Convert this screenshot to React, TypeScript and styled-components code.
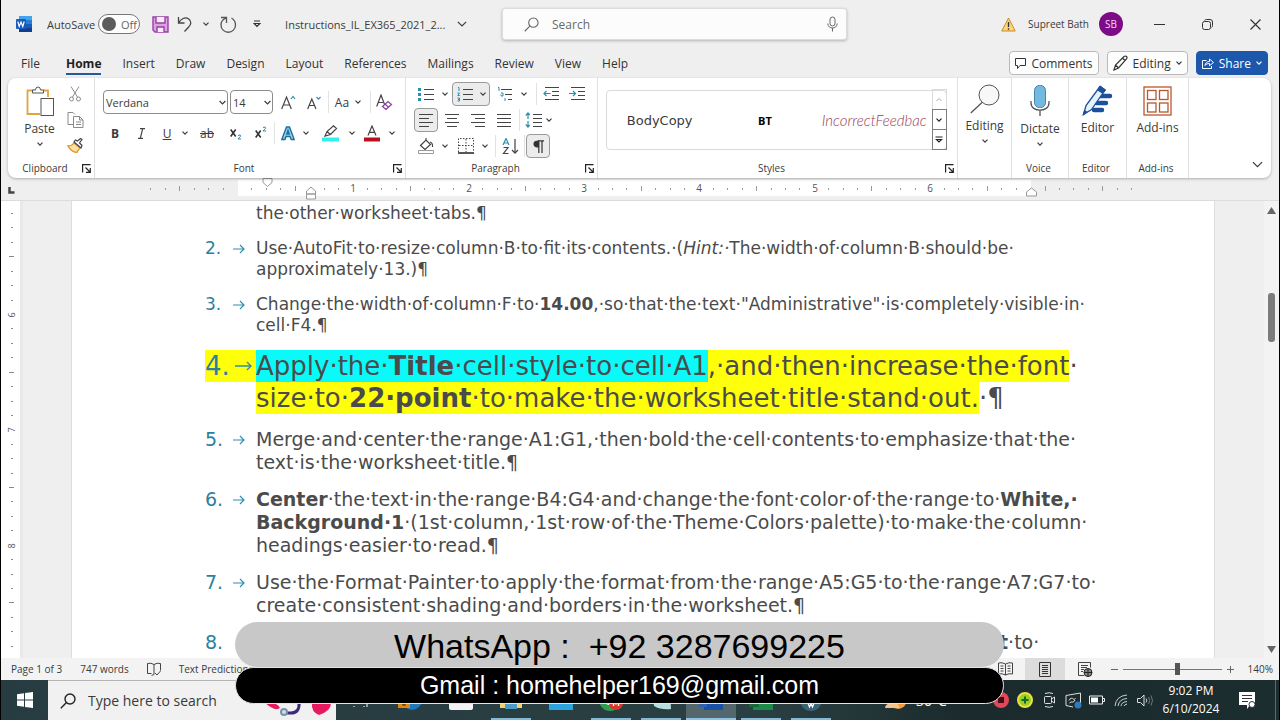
import React from 'react';
import styled, { createGlobalStyle, css } from 'styled-components';

const Global = createGlobalStyle`
  *, *::before, *::after { box-sizing: border-box; }
  body { margin: 0; background: #000; font-family: "Open Sans", "Noto Sans", sans-serif; color: #3b3b3b; }
  button, input, select { font: inherit; color: inherit; }
  button { background: none; border: 0; padding: 0; cursor: pointer; }
  svg { display: block; flex: none; }
`;

/* ---------- shell ---------- */
const Shell = styled.div`
  position: relative;
  height: 100vh;
  min-height: 480px;
  display: flex;
  flex-direction: column;
  overflow: hidden;
  background: #efefef;
  border-left: 1px solid #000;
  border-right: 1px solid #000;
`;

/* ---------- title bar ---------- */
const TitleBar = styled.header`
  display: flex;
  align-items: center;
  height: 48px;
  flex: none;
  padding: 0 12px 0 15px;
  font-size: 11px;
`;
const TitleLeft = styled.div`
  display: flex;
  align-items: center;
  width: 486px;
  flex: none;
`;
const AutoSave = styled.label`
  display: flex;
  align-items: center;
  gap: 3px;
  margin: 0 12px 0 15px;
`;
const Toggle = styled.span`
  display: flex;
  align-items: center;
  gap: 5px;
  width: 42px;
  height: 20px;
  padding-left: 3px;
  border: 1px solid #777;
  border-radius: 10px;
  background: #fdfdfd;
  color: #666;
`;
const ToggleBox = styled.input`
  appearance: none;
  margin: 0;
  width: 14px;
  height: 14px;
  border-radius: 50%;
  background: #5c5c5c;
`;
const QuickButton = styled.button<{ $w: number }>`
  width: ${(p) => p.$w}px;
  height: 24px;
  display: flex;
  align-items: center;
  justify-content: center;
`;
const FileName = styled.button`
  display: flex;
  align-items: center;
  gap: 12px;
  margin-left: 16px;
  white-space: nowrap;
`;
const SearchBox = styled.label`
  display: flex;
  align-items: center;
  gap: 13px;
  flex: 0 1 345px;
  height: 32px;
  padding: 0 8px 0 21px;
  background: #fcfcfc;
  border: 1px solid #dcdcdc;
  border-radius: 3px;
  box-shadow: 0 1px 3px rgba(0, 0, 0, 0.25);
  font-size: 12px;
`;
const SearchInput = styled.input`
  flex: 1;
  min-width: 0;
  border: 0;
  outline: 0;
  padding: 0;
  background: none;
  &::placeholder { color: #6a6a6a; opacity: 1; }
`;
const TitleRight = styled.div`
  display: flex;
  align-items: center;
  margin-left: auto;
`;
const UserName = styled.span`
  margin-left: 12px;
  font-size: 10px;
  white-space: nowrap;
`;
const Avatar = styled.span`
  display: flex;
  align-items: center;
  justify-content: center;
  width: 24px;
  height: 24px;
  margin: 0 12px 0 10px;
  border-radius: 50%;
  background: #7d0a86;
  color: #f3d9f5;
  font-size: 10px;
`;
const WindowButton = styled.button`
  width: 48px;
  height: 32px;
  display: flex;
  align-items: center;
  justify-content: center;
  &:last-child { width: 24px; margin-left: 12px; }
`;

/* ---------- tabs ---------- */
const TabBar = styled.nav`
  display: flex;
  align-items: center;
  height: 30px;
  flex: none;
  padding: 0 11px 0 20px;
  font-size: 12px;
`;
const Tab = styled.a<{ $active?: boolean }>`
  margin-right: 21px;
  padding-top: 4px;
  line-height: 18px;
  color: #333;
  text-decoration: none;
  border-bottom: 2px solid transparent;
  &:first-child { margin-right: 26px; }
  ${(p) => p.$active && css`
    font-weight: 700;
    color: #1f1f1f;
    border-color: #2b579a;
  `}
`;
const TabActions = styled.div`
  display: flex;
  gap: 8px;
  margin-left: auto;
`;
const ActionButton = styled.button<{ $primary?: boolean }>`
  display: flex;
  align-items: center;
  gap: 5px;
  height: 24px;
  padding: 0 5px;
  border: 1px solid ${(p) => (p.$primary ? '#1c57ab' : '#b9b9b9')};
  border-radius: 4px;
  background: ${(p) => (p.$primary ? '#1c57ab' : '#fdfdfd')};
  color: ${(p) => (p.$primary ? '#fff' : '#333')};
  font-size: 12px;
`;

/* ---------- ribbon ---------- */
const Ribbon = styled.section`
  display: flex;
  height: 100px;
  flex: none;
  margin: 0 8px 0 7px;
  background: #fff;
  border-radius: 8px;
  box-shadow: 0 1px 3px rgba(0, 0, 0, 0.28);
  position: relative;
`;
const Group = styled.div<{ $w: number }>`
  display: flex;
  flex-direction: column;
  flex: 0 0 ${(p) => p.$w}px;
  padding: 4px 0 2px;
  border-right: 1px solid #e0e0e0;
  background-clip: padding-box;
`;
const GroupBody = styled.div`
  flex: 1;
  display: flex;
  min-height: 0;
`;
const GroupLabel = styled.div`
  display: flex;
  align-items: center;
  height: 16px;
  padding-right: 3px;
  font-size: 10px;
`;
const GroupName = styled.span`
  flex: 1;
  text-align: center;
  white-space: nowrap;
`;
const BigButton = styled.button<{ $gap: number; $top: number; $left?: number }>`
  flex: 1;
  display: flex;
  flex-direction: column;
  align-items: center;
  gap: ${(p) => p.$gap}px;
  padding-top: ${(p) => p.$top}px;
  padding-left: ${(p) => p.$left ?? 0}px;
  font-size: 12px;
  line-height: 16px;
`;
const SmallStack = styled.div`
  display: flex;
  flex-direction: column;
  align-items: center;
  gap: 10px;
  width: 38px;
  padding: 4px 0 0;
`;
const PlainButton = styled.button`
  display: block;
`;
const Rows = styled.div<{ $top: number; $gap: number }>`
  flex: 1;
  display: flex;
  flex-direction: column;
  gap: ${(p) => p.$gap}px;
  padding: ${(p) => p.$top}px 0 0 8px;
`;
const Row = styled.div`
  display: flex;
  align-items: center;
  height: 24px;
`;
const SelectWrap = styled.label<{ $w: number }>`
  display: flex;
  align-items: center;
  width: ${(p) => p.$w}px;
  height: 24px;
  margin-right: 2px;
  padding-right: 1px;
  border: 1px solid #8c8c8c;
  border-radius: 4px;
`;
const Select = styled.select`
  flex: 1;
  min-width: 0;
  appearance: none;
  border: 0;
  background: none;
  outline: 0;
  padding: 0 0 0 2px;
  font-size: 11px;
`;
const Tool = styled.button<{ $w: number; $on?: boolean }>`
  display: flex;
  align-items: center;
  justify-content: center;
  gap: 7px;
  flex: none;
  width: ${(p) => p.$w}px;
  height: 24px;
  font-size: 12px;
  border-radius: 4px;
  ${(p) => p.$on && css`
    background: #ececec;
    border: 1px solid #9a9a9a;
  `}
`;
const Divider = styled.span<{ $before?: number }>`
  width: 1px;
  height: 22px;
  background: #e2e2e2;
  margin: 0 1px 0 ${(p) => p.$before ?? 1}px;
`;
const Gallery = styled.div`
  display: flex;
  flex: 1;
  height: 60px;
  margin: 8px 10px 0 8px;
  border: 1px solid #dadada;
  border-radius: 4px;
`;
const StyleCard = styled.button`
  flex: 1;
  min-width: 0;
  overflow: hidden;
  white-space: nowrap;
`;
const BodyStyle = styled(StyleCard)`
  font-family: "DejaVu Sans", sans-serif;
  font-size: 13px;
`;
const BoldStyle = styled(StyleCard)`
  color: #000;
  font-weight: 700;
  font-size: 11px;
`;
const FeedbackStyle = styled(StyleCard)`
  margin: 0 6px 0 4px;
  font-family: Lato, sans-serif;
  font-style: italic;
  font-weight: 300;
  color: #9c3c56;
  font-size: 15px;
  text-align: left;
`;
const Steps = styled.div`
  display: flex;
  flex-direction: column;
  width: 15px;
  margin: -1px;
`;
const Step = styled.button<{ $dim?: boolean }>`
  flex: 1;
  display: flex;
  align-items: center;
  justify-content: center;
  border: 1px solid ${(p) => (p.$dim ? '#dadada' : '#7e7e7e')};
  margin-top: -1px;
  color: ${(p) => (p.$dim ? '#aaa' : '#222')};
`;
const Collapse = styled.button`
  margin: auto 8px 8px auto;
`;

/* ---------- ruler + document ---------- */
const RulerBar = styled.div`
  height: 23px;
  flex: none;
  border-bottom: 1px solid #dcdcdc;
  overflow: hidden;
`;
const Workspace = styled.main`
  flex: 1;
  min-height: 0;
  display: flex;
  overflow: hidden;
`;
const SideRuler = styled.div`
  width: 22px;
  flex: none;
  background: #fff;
  border-right: 3px solid #e9e9e9;
  overflow: hidden;
`;
const Page = styled.article`
  flex: 1;
  min-width: 0;
  margin: 0 49px 0 48px;
  padding: 2px 0 0 133px;
  background: #fff;
  border: solid #dedede;
  border-width: 0 1px;
  overflow: hidden;
  color: #4b4b4b;
  font-family: "DejaVu Sans", Verdana, sans-serif;
`;
const Steplist = styled.ol`
  list-style: none;
  margin: 0;
  padding: 0;
  display: flex;
  flex-direction: column;
  gap: 14px;
`;
const sizes = {
  s: css`font-size: 17px; line-height: 21px;`,
  m: css`font-size: 19px; line-height: 23px;`,
  l: css`font-size: 26px; line-height: 32px;`,
};
const StepItem = styled.li<{ $size: keyof typeof sizes }>`
  display: grid;
  grid-template-columns: 51px 1fr;
  white-space: nowrap;
  ${(p) => sizes[p.$size]}
`;
const Num = styled.span<{ $mark?: boolean }>`
  display: flex;
  align-items: center;
  justify-content: space-between;
  align-self: start;
  padding-right: ${(p) => (p.$mark ? 4 : 11)}px;
  background: ${(p) => (p.$mark ? '#ffff0a' : 'none')};
  color: #2d7f9d;
`;
const Mark = styled.mark<{ $c: string }>`
  background: ${(p) => p.$c};
  color: inherit;
  padding: 1px 0;
`;
const Trailing = styled.span`
  padding-left: 743px;
`;
const Scroll = styled.div`
  width: 15px;
  flex: none;
  display: flex;
  flex-direction: column;
  align-items: center;
  padding: 6px 0 5px;
  background: #f3f3f3;
`;
const Thumb = styled.div`
  width: 7px;
  height: 49px;
  margin: 79px 0 auto;
  border-radius: 3px;
  background: #7c7c7c;
`;

/* ---------- status bar ---------- */
const StatusBar = styled.footer`
  display: flex;
  align-items: center;
  height: 22px;
  flex: none;
  padding: 0 6px 0 10px;
  background: #f3f3f3;
  font-size: 10px;
`;
const StatusItem = styled.span`
  margin-right: 18px;
  white-space: nowrap;
`;
const ViewButton = styled.button<{ $on?: boolean }>`
  display: flex;
  align-items: center;
  justify-content: center;
  width: 40px;
  height: 22px;
  background: ${(p) => (p.$on ? '#dcdcdc' : 'none')};
`;
const ZoomGroup = styled.div`
  display: flex;
  align-items: center;
  margin-left: 5px;
`;
const ZoomRange = styled.input`
  appearance: none;
  width: 99px;
  height: 12px;
  margin: 0 4px;
  background: linear-gradient(#777, #777) center / 100% 1px no-repeat;
  &::-webkit-slider-thumb {
    appearance: none;
    width: 5px;
    height: 12px;
    background: #555;
  }
`;
const ZoomValue = styled.output`
  width: 38px;
  text-align: right;
`;

/* ---------- taskbar ---------- */
const Taskbar = styled.div`
  display: flex;
  height: 40px;
  flex: none;
  background: linear-gradient(90deg, #263c40, #2a3f42 60%, #1b2b2d 75%, #1b2d2f);
  color: #fff;
`;
const StartButton = styled.button`
  width: 47px;
  display: flex;
  align-items: center;
  justify-content: center;
`;
const TaskSearch = styled.label`
  display: flex;
  align-items: center;
  gap: 12px;
  width: 288px;
  padding-left: 12px;
  background: #f1f1f1;
  color: #333;
  border-top: 1px solid #b5b5b5;
  font-size: 14px;
  overflow: hidden;
  & input { flex: 0 0 164px; }
  & input::placeholder { color: #3a3a3a; }
`;
const AppButton = styled.button<{ $open?: boolean; $active?: boolean }>`
  width: 50px;
  display: flex;
  justify-content: center;
  align-items: center;
  background: ${(p) => (p.$active ? '#53676d' : 'none')};
  box-shadow: ${(p) => (p.$active ? 'inset 0 -2px #8fc4e6' : 'none')};
  ${(p) => p.$open && css`
    background: linear-gradient(#86b9d6, #86b9d6) bottom / 40px 2px no-repeat;
  `}
`;
const Weather = styled.div`
  display: flex;
  align-items: center;
  gap: 8px;
  margin-left: 48px;
  font-size: 14px;
`;
const Tray = styled.div`
  display: flex;
  align-items: center;
  margin-left: auto;
`;
const TrayButton = styled.button`
  width: 24px;
  display: flex;
  justify-content: center;
`;
const Clock = styled.time`
  width: 68px;
  text-align: center;
  font-size: 12px;
  line-height: 18px;
  white-space: nowrap;
`;
const NoticeButton = styled.button`
  width: 44px;
  display: flex;
  justify-content: center;
`;
const DesktopEdge = styled.span`
  align-self: stretch;
  width: 1px;
  margin: 0 3px 0 6px;
  background: #5c6c6e;
`;

/* ---------- contact banner, floats over the window ---------- */
const Banner = styled.aside`
  position: absolute;
  left: 234px;
  right: 275px;
  bottom: 16px;
  font-family: "Liberation Sans", Arial, sans-serif;
  text-align: center;
`;
const Phone = styled.div`
  height: 45px;
  border-radius: 23px;
  background: #c8c8c8;
  color: #000;
  font-size: 34px;
  line-height: 48px;
  white-space: pre;
`;
const Mail = styled.div`
  height: 37px;
  border: 1px solid #e4e4e4;
  border-radius: 19px;
  background: #000;
  color: #fff;
  font-size: 25px;
  line-height: 34px;
`;

/* ---------- icons ---------- */
type IconProps = { w: number; h: number; children: React.ReactNode; sw?: number; c?: string; vb?: string };
const Icon = ({ w, h, children, sw = 1, c = 'currentColor', vb }: IconProps) => (
  <svg width={w} height={h} viewBox={vb ?? `0 0 ${w} ${h}`} fill="none" stroke={c} strokeWidth={sw} aria-hidden="true">{children}</svg>
);
const Chevron = ({ w = 6, sw = 1.2 }: { w?: number; sw?: number }) => (
  <Icon w={w} h={w} vb="0 0 6 6" sw={sw * 6 / w}><path d="M.5 1.7 3 4.2 5.5 1.7" /></Icon>
);
const Drop = ({ w = 12, label }: { w?: number; label: string }) => (
  <Tool $w={w} aria-label={label}><Chevron /></Tool>
);
const Launcher = () => (
  <PlainButton aria-label="More options">
    <Icon w={9} h={9} c="#222" sw={1.2}><path d="M.6 8.500V.6H8.500M3.500 3.500l4.500 4.500M8.300 4v4.300H4" /></Icon>
  </PlainButton>
);
const Lens = ({ s, c, sw = 1.2 }: { s: number; c: string; sw?: number }) => (
  <Icon w={s} h={s} vb="0 0 16 16" c={c} sw={sw * 16 / s}><circle cx="10" cy="6" r="5" /><path d="M6.500 9.500 .8 15.200" /></Icon>
);
const Lines = ({ rows, children }: { rows: [number, number][]; children?: React.ReactNode }) => (
  <Icon w={16} h={16} c="#444">
    {rows.map(([a, b], i) => <path key={i} d={`M${a} ${(rows.length === 3 ? 3 : 2) + i * (rows.length === 3 ? 5 : 4)}.5H${b}`} />)}
    {children}
  </Icon>
);
const Arrow = ({ w }: { w: number }) => (
  <Icon w={w} h={12} vb={`0 0 ${w} 12`} c="#2d8fb0" sw={w > 13 ? 1.4 : 1.1}>
    <path d={`M0 6H${w - 1}M${w - 5} 2l4 4-4 4`} />
  </Icon>
);

const HorizontalRuler = () => {
  const ticks = [];
  for (let i = -6; i <= 62; i++) {
    const x = Math.round(237 + i * 14.42);
    if (i === 0) continue;
    if (i % 8 === 0 && i > 0 && i < 56) ticks.push(<text key={i} x={x} y="14" textAnchor="middle" fontSize="10" fill="#555" stroke="none">{i / 8}</text>);
    else if (i % 4 === 0) ticks.push(<path key={i} d={`M${x - 1}.5 8v5`} />);
    else ticks.push(<path key={i} d={`M${x - 1}.5 10v2`} />);
  }
  return (
    <Icon w={1278} h={23} c="#999">
      <rect x="237" y="2" width="793" height="16" fill="#fff" stroke="none" />
      <path d="M8.500 9v5.500h5" stroke="#444" strokeWidth="2.500" />
      {ticks}
      <path d="M262 .5h9v4l-4.500 4-4.500-4z" fill="#fff" />
      <path d="M305.500 16v-3l4.500-4 4.500 4v3zM305.500 16h9v5h-9z" fill="#fff" />
      <path d="M1025.500 18v-4l5-4 5 4v4z" fill="#fff" />
    </Icon>
  );
};

const VerticalRuler = () => {
  const ticks = [];
  for (let i = -7; i <= 23; i++) {
    const y = Math.round(114 + i * 14.42);
    if (i % 8 === 0) ticks.push(<text key={i} x="0" y="0" transform={`translate(14 ${y}) rotate(-90)`} textAnchor="middle" fontSize="9" fill="#555" stroke="none">{6 + i / 8}</text>);
    else if (i % 4 === 0) ticks.push(<path key={i} d={`M8 ${y - 1}.5h5`} />);
    else ticks.push(<path key={i} d={`M10 ${y - 1}.5h2`} />);
  }
  return <Icon w={19} h={460} c="#888">{ticks}</Icon>;
};

export default function App() {
  return (
    <>
      <Global />
      <Shell>
        <TitleBar>
          <TitleLeft>
            <Icon w={16} h={16}>
              <rect x="3" width="13" height="16" rx="1" fill="#2b7cd3" stroke="none" />
              <path d="M3 0h13v4H3z" fill="#41a5ee" stroke="none" /><path d="M3 8h13v4H3z" fill="#185abd" stroke="none" /><path d="M3 12h13v4H3z" fill="#103f91" stroke="none" />
              <rect y="3" width="10" height="10" rx="1" fill="#185abd" stroke="none" />
              <path d="m1.800 5.500 1.400 5L5 6l1.800 4.500 1.400-5" stroke="#fff" strokeWidth="1.200" />
            </Icon>
            <AutoSave>AutoSave<Toggle><ToggleBox type="checkbox" />Off</Toggle></AutoSave>
            <QuickButton $w={17} aria-label="Save">
              <Icon w={17} h={17} c="#9a3fa8" sw={1.4}>
                <path d="M1 1h15v15H3l-2-2z" fill="#d9a3e0" /><path d="M4 1v6h9V1M5 16v-5h7v5" fill="#f6eef7" />
              </Icon>
            </QuickButton>
            <QuickButton $w={32} aria-label="Undo">
              <Icon w={16} h={16} c="#444" sw={1.3}><path d="M1.500 1v6h6M1.800 6.500C4 3 8 .5 11.500 2.800c3.500 2.500 2.600 6 0 8.500L7.500 15.500" /></Icon>
            </QuickButton>
            <QuickButton $w={10} aria-label="Undo history"><Chevron /></QuickButton>
            <QuickButton $w={34} aria-label="Redo">
              <Icon w={17} h={17} c="#555" sw={1.3}><path d="M1 1.500h5.500V7M6 2C2.500 3.500 1 6 1 9a7.200 7.200 0 0 0 14.500 0c0-3-1.500-5.500-4-7" /></Icon>
            </QuickButton>
            <QuickButton $w={24} aria-label="Customize Quick Access Toolbar">
              <Icon w={8} h={8} c="#333" sw={1.2}><path d="M1 1h6M1.200 3.500 4 6.300l2.800-2.800z" /></Icon>
            </QuickButton>
            <FileName>Instructions_IL_EX365_2021_2...<Chevron w={10} /></FileName>
          </TitleLeft>
          <SearchBox>
            <Lens s={15} c="#666" sw={1.1} />
            <SearchInput placeholder="Search" aria-label="Search" />
            <Icon w={11} h={16} c="#666"><rect x="3" y="1" width="5" height="9" rx="2.500" /><path d="M.8 7.500c0 6 9.400 6 9.400 0M5.500 12v3.500" /></Icon>
          </SearchBox>
          <TitleRight>
            <Icon w={15} h={15} c="#c98a2b"><path d="M7.500 1 14.200 14H.8z" fill="#ffd77a" /><path d="M7.500 5v5M7.500 11.200v1.500" stroke="#333" strokeWidth="1.400" /></Icon>
            <UserName>Supreet Bath</UserName>
            <Avatar>SB</Avatar>
            <WindowButton aria-label="Minimize"><Icon w={11} h={11} c="#333"><path d="M0 5.500h11" /></Icon></WindowButton>
            <WindowButton aria-label="Restore"><Icon w={11} h={11} c="#333"><rect x=".5" y="2.500" width="8" height="8" rx="2" /><path d="M2.500 1.500Q3 .5 4.500 .5h3.500q2.500 0 2.500 2.500v3.500q0 1.500-1 2" /></Icon></WindowButton>
            <WindowButton aria-label="Close"><Icon w={11} h={11} c="#333" sw={1.2}><path d="m.5.5 10 10M10.500.5l-10 10" /></Icon></WindowButton>
          </TitleRight>
        </TitleBar>

        <TabBar>
          {['File', 'Home', 'Insert', 'Draw', 'Design', 'Layout', 'References', 'Mailings', 'Review', 'View', 'Help'].map((t) => (
            <Tab key={t} href="#" $active={t === 'Home'}>{t}</Tab>
          ))}
          <TabActions>
            <ActionButton><Icon w={11} h={11}><path d="M.5.5h10v7H5l-2.500 3v-3h-2z" /></Icon>Comments</ActionButton>
            <ActionButton>
              <Icon w={15} h={16} sw={1.2}><path d="m1 15 1.500-5L11 1.500q1.500-1 2.500 0t0 2.500L5.500 13zM9.500 3l2.500 2.500M2.500 10 5.500 13" /></Icon>
              Editing<Chevron />
            </ActionButton>
            <ActionButton $primary>
              <Icon w={12} h={12}><path d="M4.500 3.500h-4v8h9V9M3 8.500C3.500 5.500 5 4.500 7.500 4.500V2l4 3.500-4 3.200V6.500C5.500 6.500 4 7 3 8.500z" /></Icon>
              Share<Chevron />
            </ActionButton>
          </TabActions>
        </TabBar>

        <Ribbon>
          <Group $w={87}>
            <GroupBody>
              <BigButton $gap={4} $top={4} $left={15}>
                <Icon w={28} h={31} c="#555">
                  <path d="M14 28H1.500V4.500h7M17 4.500h5V11" stroke="#e0a63c" strokeWidth="1.800" />
                  <path d="M6.500 7V4h3q0-3 2.500-3t2.500 3h3v3z" fill="#fff" /><rect x="15" y="12.500" width="12.500" height="17" fill="#fff" />
                </Icon>
                Paste<Chevron />
              </BigButton>
              <SmallStack>
                <PlainButton aria-label="Cut"><Icon w={12} h={16} c="#8a8a8a"><path d="M2 .5 8.500 11M10 .5 3.500 11" /><circle cx="2.500" cy="13" r="2" /><circle cx="9.500" cy="13" r="2" /></Icon></PlainButton>
                <PlainButton aria-label="Copy"><Icon w={17} h={16} c="#8a8a8a"><path d="M6 12.500H1V.5h5l2 2M6.500 4.500h6l3.500 3.500v7.500H6.500zM12.500 4.500V8H16M9 10h5M9 12.500h5" /></Icon></PlainButton>
                <PlainButton aria-label="Format Painter"><Icon w={16} h={15} c="#444"><path d="M1 8q4 0 6-3l6 5q-2 2-3 4.500Q4 14 1 8z" fill="#ffe0a0" stroke="#dd9a2b" strokeWidth="1.300" /><path d="m7 4 7 6 1-2.500L12.500 5 15 1.500 13.500.5l-3 2.500L8.500 2z" fill="#fff" strokeWidth="1.200" /></Icon></PlainButton>
              </SmallStack>
            </GroupBody>
            <GroupLabel><GroupName>Clipboard</GroupName><Launcher /></GroupLabel>
          </Group>

          <Group $w={311}>
            <GroupBody>
              <Rows $top={8} $gap={7}>
                <Row>
                  <SelectWrap $w={125}><Select aria-label="Font"><option>Verdana</option></Select><Chevron w={7} /></SelectWrap>
                  <SelectWrap $w={43}><Select aria-label="Font size"><option>14</option></Select><Chevron w={7} /></SelectWrap>
                  <Tool $w={26} aria-label="Increase font size"><Icon w={15} h={15} c="#444" sw={1.2}><path d="M.7 14 5.500 2l4.800 12M2.300 10h6.400" /><path d="m10 4 2-2.500L14 4" stroke="#2d8fb0" /></Icon></Tool>
                  <Tool $w={26} aria-label="Decrease font size"><Icon w={14} h={15} c="#444" sw={1.2}><path d="M.7 14 4.800 4l4.200 10M2.200 10.500h5.300" /><path d="m9.500 2 2 2.200 2-2.200" stroke="#2d8fb0" /></Icon></Tool>
                  <Divider />
                  <Tool $w={24}>Aa</Tool><Drop w={8} label="Change case" />
                  <Divider $before={8} />
                  <Tool $w={24} aria-label="Clear formatting"><Icon w={17} h={16} c="#444" sw={1.2}><path d="M.7 12.500 5 1l4.300 11.500M2.200 8.500H7" /><path d="m6.500 12.500 5.500-5 3.500 3-5.500 5zM9 10l3.500 3.300" stroke="#8a3fa0" fill="#fff" /></Icon></Tool>
                </Row>
                <Row>
                  <Tool $w={24}><b>B</b></Tool>
                  <Tool $w={28} aria-label="Italic"><Icon w={9} h={11} c="#444" sw={1.2}><path d="M3 .6h5M1 10.400h5M5.700.6 3.300 10.400" /></Icon></Tool>
                  <Tool $w={24}><u>U</u></Tool>
                  <Drop label="Underline options" />
                  <Tool $w={32}><s>ab</s></Tool>
                  <Tool $w={26} aria-label="Subscript"><Icon w={12} h={13} c="#333" sw={1.6}><path d="m.7 2.500 5 7M5.700 2.500l-5 7" /><path d="M8 8.500q3-1.500 2.500.8L8 12h3.200" stroke="#2d8fb0" strokeWidth="1" /></Icon></Tool>
                  <Tool $w={24} aria-label="Superscript"><Icon w={12} h={14} c="#333" sw={1.6}><path d="m.7 4.500 5 7M5.700 4.500l-5 7" /><path d="M8 1.500q3-1.500 2.500.8L8 5h3.200" stroke="#2d8fb0" strokeWidth="1" /></Icon></Tool>
                  <Divider />
                  <Tool $w={24} aria-label="Text effects"><Icon w={14} h={15} c="#1f7199"><path d="M.8 13.500 5.500 1h3l4.700 12.500h-3L9 10.500H5l-1 3zM5.800 8h2.400L7 4.200z" fill="#8fd3ee" strokeWidth="1.400" /></Icon></Tool>
                  <Drop label="Text effects options" />
                  <Tool $w={36} aria-label="Highlight color"><Icon w={17} h={17} c="#444"><path d="M0 14.500h17" stroke="#2ff0f0" strokeWidth="4" /><path d="m3 11 2-4.500L11.500.8l3 2.700L8.500 9.500zM5 6.500l3.500 3" strokeWidth="1.200" /></Icon></Tool>
                  <Drop w={8} label="Highlight options" />
                  <Tool $w={32} aria-label="Font color"><Icon w={16} h={17} c="#444" sw={1.2}><path d="M0 14.500h16" stroke="#b8101c" strokeWidth="4" /><path d="M4 10.500 8 1l4 9.500M5.500 7.300h5" /></Icon></Tool>
                  <Drop w={8} label="Font color options" />
                </Row>
              </Rows>
            </GroupBody>
            <GroupLabel><GroupName>Font</GroupName><Launcher /></GroupLabel>
          </Group>

          <Group $w={192}>
            <GroupBody>
              <Rows $top={0} $gap={2}>
                <Row>
                  <Tool $w={24} aria-label="Bullets"><Lines rows={[[6, 16], [6, 16], [6, 16]]}><path d="M0 3.500h3M0 8.500h3M0 13.500h3" stroke="#2d8fb0" strokeWidth="3" /></Lines></Tool>
                  <Drop w={14} label="Bullet options" />
                  <Tool $w={38} $on aria-label="Numbering">
                    <Lines rows={[[6, 16], [6, 16], [6, 16]]}><path d="M1 1.500h1v3.500M.5 7h2L.8 9.500h2M.5 12h2v3h-2M1 13.500h1.500" stroke="#2d8fb0" /></Lines>
                    <Chevron />
                  </Tool>
                  <Tool $w={30} aria-label="Multilevel list"><Lines rows={[[4, 15], [8, 15], [11, 15]]}><path d="M1 1.500h1v3.500M4 7h2v3H4V8.500M8 12v3" stroke="#2d8fb0" /></Lines></Tool>
                  <Drop w={8} label="Multilevel options" />
                  <Divider $before={8} />
                  <Tool $w={26} aria-label="Decrease indent"><Icon w={16} h={16} c="#444"><path d="M2 1.500h14M9 5.500h7M9 9.500h7M2 13.500h14" /><path d="M7.500 7.500H1M3.500 5 1 7.500 3.500 10" stroke="#2d8fb0" strokeWidth="1.200" /></Icon></Tool>
                  <Tool $w={26} aria-label="Increase indent"><Icon w={16} h={16} c="#444"><path d="M2 1.500h14M9 5.500h7M9 9.500h7M2 13.500h14" /><path d="M0 7.500h6.500M4 5l2.500 2.500L4 10" stroke="#2d8fb0" strokeWidth="1.200" /></Icon></Tool>
                </Row>
                <Row>
                  <Tool $w={24} $on aria-label="Align left"><Lines rows={[[1, 15], [1, 11], [1, 15], [1, 11]]} /></Tool>
                  <Tool $w={28} aria-label="Center"><Lines rows={[[1, 15], [3, 13], [1, 15], [3, 13]]} /></Tool>
                  <Tool $w={24} aria-label="Align right"><Lines rows={[[1, 15], [5, 15], [1, 15], [5, 15]]} /></Tool>
                  <Tool $w={28} aria-label="Justify"><Lines rows={[[1, 15], [1, 15], [1, 15], [1, 15]]} /></Tool>
                  <Divider />
                  <Tool $w={24} aria-label="Line spacing"><Icon w={17} h={16} c="#444"><path d="M8 2.500h9M8 6.500h9M8 10.500h9M8 14.500h9" /><path d="M3 1v14M.8 3.500 3 1l2.200 2.500M.8 12.500 3 15l2.200-2.500" stroke="#2d8fb0" strokeWidth="1.200" strokeDasharray="6 2 20" /></Icon></Tool>
                  <Drop w={8} label="Line spacing options" />
                </Row>
                <Row>
                  <Tool $w={24} aria-label="Shading"><Icon w={16} h={16} c="#444"><path d="M2.500 7.500 8 2l4.500 4.500-5.500 5zM8 2V0M12 4q3 1 2.500 5" strokeWidth="1.200" /><path d="M.5 12.500h15v3H.5z" stroke="#999" /></Icon></Tool>
                  <Drop w={14} label="Shading options" />
                  <Tool $w={28} aria-label="Borders"><Icon w={16} h={16} c="#444"><path d="M.5 14V.5h15V14M8 1v13M1 7.500h14" strokeDasharray="1.500 1.500" /><path d="M0 15h16" strokeWidth="1.800" /></Icon></Tool>
                  <Drop w={10} label="Border options" />
                  <Divider $before={5} />
                  <Tool $w={26} aria-label="Sort"><Icon w={17} h={17} c="#444" sw={1.2}><path d="m1 7 3-6.500L7 7M2 5h4" stroke="#2d8fb0" /><path d="M1.500 9.500H6L1.500 15.500H6.500M13 1v14M10 12l3 3.200 3-3.200" /></Icon></Tool>
                  <Divider />
                  <Tool $w={24} $on aria-label="Show paragraph marks"><Icon w={11} h={13} c="#333" sw={1.2}><path d="M5.500 7Q1 7 1 4t4.500-3z" fill="#333" /><path d="M5 .8h6M5.800 1v12M9 1v12" /></Icon></Tool>
                </Row>
              </Rows>
            </GroupBody>
            <GroupLabel><GroupName>Paragraph</GroupName><Launcher /></GroupLabel>
          </Group>

          <Group $w={360}>
            <GroupBody>
              <Gallery>
                <BodyStyle>BodyCopy</BodyStyle>
                <BoldStyle>BT</BoldStyle>
                <FeedbackStyle>IncorrectFeedback</FeedbackStyle>
                <Steps>
                  <Step $dim aria-label="Previous styles"><Icon w={6} h={6}><path d="M.5 4 3 1.500 5.500 4" /></Icon></Step>
                  <Step aria-label="Next styles"><Chevron /></Step>
                  <Step aria-label="All styles"><Icon w={8} h={8} sw={1.2}><path d="M.5 1h7M1.500 3.500 4 6l2.500-2.500z" /></Icon></Step>
                </Steps>
              </Gallery>
            </GroupBody>
            <GroupLabel><GroupName>Styles</GroupName><Launcher /></GroupLabel>
          </Group>

          <Group $w={54}>
            <GroupBody>
              <BigButton $gap={4} $top={2}>
                <Icon w={30} h={30} c="#555"><circle cx="19" cy="11" r="10" fill="#f8f8f8" /><path d="M12 18.500.8 29" strokeWidth="1.300" /></Icon>
                Editing<Chevron />
              </BigButton>
            </GroupBody>
          </Group>
          <Group $w={57}>
            <GroupBody>
              <BigButton $gap={4} $top={3}>
                <Icon w={20} h={32} c="#555"><rect x="4.500" y=".5" width="11" height="22" rx="5" fill="#74b9e0" stroke="#3b86b4" /><path d="M1 16v2c0 9.500 18 9.500 18 0v-2M10 25.500V31" strokeWidth="1.300" /></Icon>
                Dictate<Chevron />
              </BigButton>
            </GroupBody>
            <GroupLabel><GroupName>Voice</GroupName></GroupLabel>
          </Group>
          <Group $w={58}>
            <GroupBody>
              <BigButton $gap={4} $top={3}>
                <Icon w={32} h={31} c="#1d4f9c"><path d="M17 11h11M14 18h10M12 25h8" strokeWidth="4.500" strokeLinecap="round" /><path d="M1.500 29.500 4 20.500 18 1.500 23 5 9.500 24.500z" fill="#e4f2fb" strokeWidth="1.300" /><path d="m18 1 5.500 4-2.500 3.500L15.500 5zM1 30l1.500-4.500L5 27z" fill="#1d4f9c" /></Icon>
                Editor
              </BigButton>
            </GroupBody>
            <GroupLabel><GroupName>Editor</GroupName></GroupLabel>
          </Group>
          <Group $w={62}>
            <GroupBody>
              <BigButton $gap={4} $top={4}>
                <Icon w={29} h={30} c="#b8562f" sw={1.3}><rect x="1" y="1" width="27" height="28" /><rect x="4.500" y="4.500" width="8.500" height="9" /><rect x="16.500" y="4.500" width="8.500" height="9" /><rect x="4.500" y="17" width="8.500" height="9" /><rect x="16.500" y="17" width="8.500" height="9" /></Icon>
                Add-ins
              </BigButton>
            </GroupBody>
            <GroupLabel><GroupName>Add-ins</GroupName></GroupLabel>
          </Group>
          <Collapse aria-label="Collapse ribbon"><Chevron w={11} /></Collapse>
        </Ribbon>

        <RulerBar><HorizontalRuler /></RulerBar>

        <Workspace>
          <SideRuler><VerticalRuler /></SideRuler>
          <Page>
            <Steplist>
              <StepItem $size="s"><span /><span>the·other·worksheet·tabs.¶</span></StepItem>
              <StepItem $size="s">
                <Num>2.<Arrow w={12} /></Num>
                <span>Use·AutoFit·to·resize·column·B·to·fit·its·contents.·(<i>Hint:·</i>The·width·of·column·B·should·be·<br />approximately·13.)¶</span>
              </StepItem>
              <StepItem $size="s">
                <Num>3.<Arrow w={12} /></Num>
                <span>Change·the·width·of·column·F·to·<b>14.00</b>,·so·that·the·text·"Administrative"·is·completely·visible·in·<br />cell·F4.¶</span>
              </StepItem>
              <StepItem $size="l">
                <Num $mark>4.<Arrow w={17} /></Num>
                <span>
                  <Mark $c="#0afafa">Apply·the·<b>Title</b>·cell·style·to·cell·A1</Mark><Mark $c="#ffff0a">,·and·then·increase·the·font</Mark>·<br />
                  <Mark $c="#ffff0a">size·to·<b>22·point</b>·to·make·the·worksheet·title·stand·out.</Mark>·¶
                </span>
              </StepItem>
              <StepItem $size="m">
                <Num>5.<Arrow w={12} /></Num>
                <span>Merge·and·center·the·range·A1:G1,·then·bold·the·cell·contents·to·emphasize·that·the·<br />text·is·the·worksheet·title.¶</span>
              </StepItem>
              <StepItem $size="m">
                <Num>6.<Arrow w={12} /></Num>
                <span><b>Center</b>·the·text·in·the·range·B4:G4·and·change·the·font·color·of·the·range·to·<b>White,·<br />Background·1</b>·(1st·column,·1st·row·of·the·Theme·Colors·palette)·to·make·the·column·<br />headings·easier·to·read.¶</span>
              </StepItem>
              <StepItem $size="m">
                <Num>7.<Arrow w={12} /></Num>
                <span>Use·the·Format·Painter·to·apply·the·format·from·the·range·A5:G5·to·the·range·A7:G7·to·<br />create·consistent·shading·and·borders·in·the·worksheet.¶</span>
              </StepItem>
              <StepItem $size="m">
                <Num>8.</Num>
                <Trailing><b>t</b>·to·</Trailing>
              </StepItem>
            </Steplist>
          </Page>
          <Scroll>
            <Icon w={9} h={7}><path d="M4.500 0 9 7H0z" fill="#666" stroke="none" /></Icon>
            <Thumb />
            <Icon w={9} h={7}><path d="M4.500 7 9 0H0z" fill="#666" stroke="none" /></Icon>
          </Scroll>
        </Workspace>

        <StatusBar>
          <StatusItem>Page 1 of 3</StatusItem>
          <StatusItem>747 words</StatusItem>
          <StatusItem><Icon w={14} h={14} c="#444"><path d="M7 2.500Q4 .5.5 1.500v10h4M7 2.500v10l-2.500 1M7 2.500Q10 .5 13.500 1.500v7M8 11l2 2 3.500-4" /></Icon></StatusItem>
          <StatusItem>Text Predictions: On</StatusItem>
          <TitleRight>
            <ViewButton aria-label="Read mode"><Icon w={15} h={14} c="#444"><path d="M7.500 2Q4 0 .5 1v11q3.500-1 7 1 3.500-2 7-1V1q-3.500-1-7 1v11M2.500 4h3M2.500 6.500h3M2.500 9h3M9.500 4h3M9.500 6.500h3M9.500 9h3" /></Icon></ViewButton>
            <ViewButton $on aria-label="Print layout"><Icon w={12} h={15} c="#333"><path d="M.5.5h11v14H.5zM3 3.500h6M3 5.500h6M3 7.500h6M3 9.500h6M3 11.500h6" /></Icon></ViewButton>
            <ViewButton aria-label="Web layout"><Icon w={15} h={15} c="#444"><path d="M6 13.500H.5V.5h12v5M3 3.500h7M3 5.500h6M3 7.500h3M3 9.500h2" /><circle cx="10" cy="10.500" r="4" fill="#888" stroke="#222" /><path d="M6 10.500h8M10 6.500v8" stroke="#222" /></Icon></ViewButton>
            <ZoomGroup>
              <PlainButton aria-label="Zoom out"><Icon w={9} h={9} c="#666"><path d="M1 4.500h7" /></Icon></PlainButton>
              <ZoomRange type="range" min={0} max={100} defaultValue={55} aria-label="Zoom" />
              <PlainButton aria-label="Zoom in"><Icon w={9} h={9} c="#666"><path d="M1 4.500h7M4.500 1v7" /></Icon></PlainButton>
              <ZoomValue>140%</ZoomValue>
            </ZoomGroup>
          </TitleRight>
        </StatusBar>

        <Taskbar>
          <StartButton aria-label="Start">
            <Icon w={16} h={16}><path d="M0 2.200 7 1.200v6.300H0zM8 1l8-1v7.500H8zM0 8.500h7v6.300l-7-1zM8 8.500h8V16l-8-1z" fill="#fff" stroke="none" /></Icon>
          </StartButton>
          <TaskSearch>
            <Lens s={16} c="#222" sw={1.4} />
            <SearchInput placeholder="Type here to search" aria-label="Type here to search" />
            <Icon w={74} h={40}>
              <path d="M0 21q14 0 16 6-5 4-16-6z" fill="#e8195f" stroke="none" />
              <path d="M35 21q1 11-8 11h-6" stroke="#3c2a7a" strokeWidth="3" /><circle cx="20" cy="31" r="3" fill="#cfe0ea" stroke="#7b93a8" strokeWidth="2" />
              <path d="M48 22q9-4 19 0 0 8-12 12-8-3-7-12z" fill="#e8195f" stroke="none" />
            </Icon>
          </TaskSearch>
          <AppButton aria-label="Task view"><Icon w={16} h={16} c="#ddd" sw={1.2}><path d="M1 1h10v10H1zM14 1v14M1 15v-1M11 15v-1" /></Icon></AppButton>
          <AppButton aria-label="Browser"><Icon w={26} h={24}><circle cx="14" cy="12" r="10" fill="#1f78b8" stroke="none" /><path d="M0 12h12v8H0z" fill="#d98a16" stroke="none" /><circle cx="6" cy="16" r="2" fill="#7a4204" stroke="none" /></Icon></AppButton>
          <AppButton aria-label="Microsoft Store"><Icon w={24} h={24}><path d="M0 2h24v18q0 2-3 2H3q-3 0-3-2z" fill="#f2f2f2" stroke="none" /><path d="M7 7h4v4H7z" fill="#e8642b" stroke="none" /><path d="M12 7h4v4h-4z" fill="#7bb32e" stroke="none" /><path d="M7 12h4v4H7z" fill="#2aa2de" stroke="none" /><path d="M12 12h4v4h-4z" fill="#f2b61c" stroke="none" /></Icon></AppButton>
          <AppButton $open aria-label="File Explorer"><Icon w={22} h={22}><path d="M0 1h22v18H0z" fill="#f0d070" stroke="none" /><path d="M5 13h12v7H5z" fill="#4a9bc8" stroke="none" /></Icon></AppButton>
          <AppButton aria-label="Mail"><Icon w={24} h={22}><path d="M0 2h24v19H0z" fill="#2ba4de" stroke="none" /></Icon></AppButton>
          <AppButton $open aria-label="Chrome"><Icon w={26} h={24}><circle cx="12" cy="12" r="11" fill="#2f9e50" stroke="none" /><circle cx="11" cy="12" r="5" fill="#fff" stroke="none" /><circle cx="18" cy="15" r="7" fill="#d3382c" stroke="none" /><path d="M15.500 18v-5l2.500 3 2.500-3v5" stroke="#fff" strokeWidth="1.300" /></Icon></AppButton>
          <AppButton $open aria-label="Notepad"><Icon w={22} h={22}><path d="M2 1h18l1 19q-10 1-17-3z" fill="#b9dcdf" stroke="none" /></Icon></AppButton>
          <AppButton $active aria-label="Word"><Icon w={24} h={22}><path d="M5 1h19v20H5z" fill="#1c4fa6" stroke="none" /><path d="M0 6h8v12H0z" fill="#2a62b4" stroke="none" /></Icon></AppButton>
          <AppButton $open aria-label="Excel"><Icon w={24} h={22}><path d="M4 1h20v20H4z" fill="#1c8a49" stroke="none" /><path d="M0 6h10v12H0z" fill="#14683a" stroke="none" /></Icon></AppButton>
          <AppButton $open aria-label="WPS"><Icon w={24} h={22}><circle cx="12" cy="11" r="11" fill="#3b6376" stroke="none" /><path d="m9 14 1.500 4 1.500-3 1.500 3 1.500-4" stroke="#fff" strokeWidth="1.300" /></Icon></AppButton>
          <Weather>
            <Icon w={24} h={20}><circle cx="14" cy="10" r="9" fill="#f29a3a" stroke="none" /><path d="M1 18q1-5 6-4 6-3 9 4z" fill="#f3c48e" stroke="none" /></Icon>
            30°C
          </Weather>
          <Tray>
            <TrayButton aria-label="Recorder"><Icon w={16} h={16}><circle cx="8" cy="8" r="8" fill="#e0485a" stroke="none" /><path d="M5 5h6v6H5z" fill="#4a0a14" stroke="none" /></Icon></TrayButton>
            <TrayButton aria-label="Antivirus"><Icon w={16} h={16}><circle cx="8" cy="8" r="7" fill="#9ccf2a" stroke="#e9e23c" strokeWidth="2" /><path d="M8 4.500v7M4.500 8h7" stroke="#17691f" strokeWidth="2" /></Icon></TrayButton>
            <TrayButton aria-label="Meet now"><Icon w={13} h={16} c="#ddd"><rect x="1.500" y="4.500" width="7" height="7" rx="1" /><path d="m8.500 7 3-2v6l-3-2M2 1.500q4-1.500 8 0M2 14.500q4 1.500 8 0" /></Icon></TrayButton>
            <TrayButton aria-label="Updates"><Icon w={17} h={17} c="#ddd"><path d="M1 3.500 15.500 1v11M1 3.500v10l7 1.500M4 8.500q2-4 5-1l1.500-1M10 8q-1 3-4 2l-1.500 1" /><circle cx="13" cy="13" r="3.500" fill="#2e78c0" stroke="none" /></Icon></TrayButton>
            <TrayButton aria-label="Battery"><Icon w={16} h={10} c="#eee"><path d="M.5 1h13v8H.5zM14 3.500h1.500v3H14" /><path d="M2 2.500h7v5H2z" fill="#fff" stroke="none" /></Icon></TrayButton>
            <TrayButton aria-label="Wi-Fi"><Icon w={14} h={13} c="#ccc"><path d="M1 12Q2 2 13 1M4 12q1-7 9-7.500M7 12q.5-4 6-4.500M10 12q.5-1.500 3-2" /></Icon></TrayButton>
            <TrayButton aria-label="Volume"><Icon w={16} h={13} c="#ddd"><path d="M.5 4.500h3L7 1v11L3.500 8.500h-3z" /><path d="M9 4.500q1.500 2 0 4" /><path d="M11.500 3q2.500 3.500 0 7M14 1.500q3 5 0 10" stroke="#6f7c7e" /></Icon></TrayButton>
            <Clock>9:02 PM<br />6/10/2024</Clock>
            <NoticeButton aria-label="Notifications"><Icon w={18} h={17}><path d="M1 0h16v13h-5l-3 4v-4H1z" fill="#fff" stroke="none" /><path d="M4 3.500h10M4 6.500h10M4 9.500h6" stroke="#26383a" /><circle cx="14" cy="12.500" r="3" fill="#fff" stroke="#26383a" /></Icon></NoticeButton>
            <DesktopEdge />
          </Tray>
        </Taskbar>

        <Banner>
          <Phone>WhatsApp :  +92 3287699225</Phone>
          <Mail>Gmail : homehelper169@gmail.com</Mail>
        </Banner>
      </Shell>
    </>
  );
}
